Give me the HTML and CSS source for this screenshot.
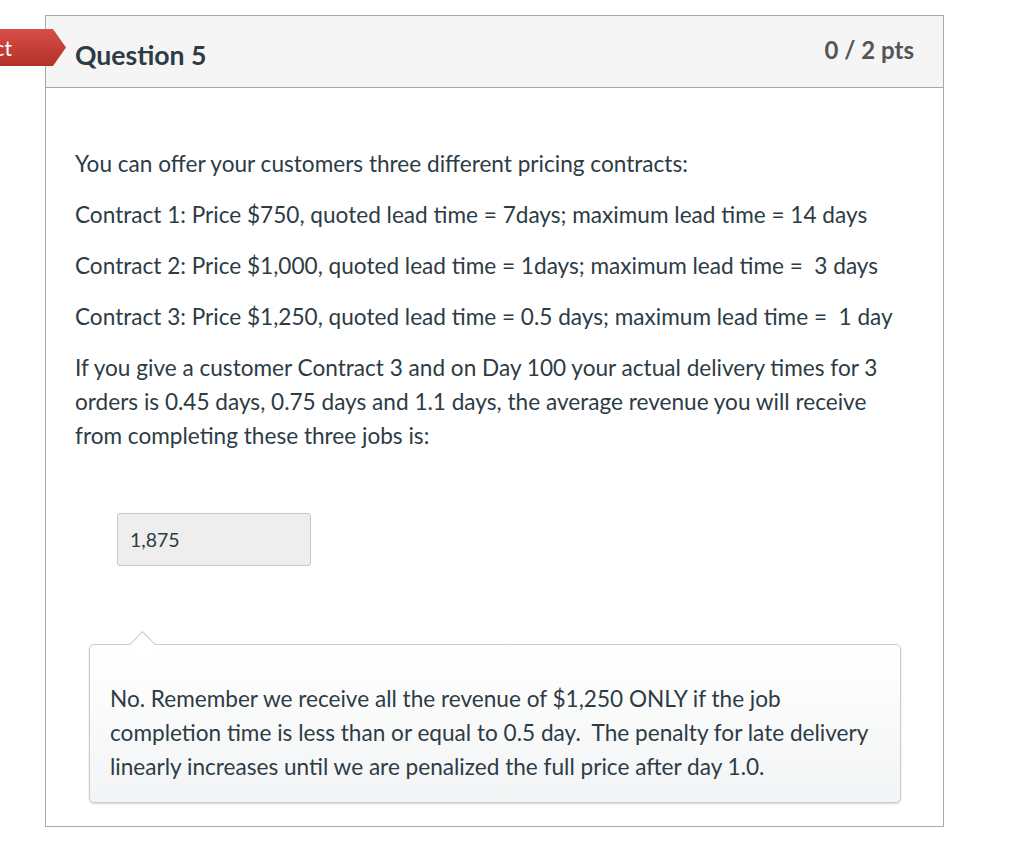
FILE: index.html
```html
<!DOCTYPE html>
<html>
<head>
<meta charset="utf-8">
<link rel="stylesheet" href="styles.css">
</head>
<body>
<div class="question">
  <div class="answer-tag">Incorrect</div>
  <div class="header">
    <span class="title">Question 5</span>
    <span class="pts">0 / 2 pts</span>
  </div>
  <div class="content">
    <div class="text">
      <p>You can offer your customers three different pricing contracts:</p>
      <p>Contract 1: Price $750, quoted lead time = 7days; maximum lead time = 14 days</p>
      <p>Contract 2: Price $1,000, quoted lead time = 1days; maximum lead time = &nbsp;3 days</p>
      <p>Contract 3: Price $1,250, quoted lead time = 0.5 days; maximum lead time = &nbsp;1 day</p>
      <p>If you give a customer Contract 3 and on Day 100 your actual delivery times for 3 orders is 0.45 days, 0.75 days and 1.1 days, the average revenue you will receive from completing these three jobs is:</p>
    </div>
    <div class="answer">1,875</div>
    <div class="feedback">
      <p>No. Remember we receive all the revenue of $1,250 ONLY if the job completion time is less than or equal to 0.5 day.&nbsp; The penalty for late delivery linearly increases until we are penalized the full price after day 1.0.</p>
    </div>
  </div>
</div>
</body>
</html>
```
FILE: styles.css
```css
html, body {
  margin: 0;
  padding: 0;
  background: #fff;
  overflow: hidden;
}
body {
  font-family: Lato, "Noto Sans", sans-serif;
  color: #2d3b45;
}
.question {
  position: relative;
  margin: 15px 0 0 45px;
  width: 899px;
  box-sizing: border-box;
  border: 1px solid #aaa;
}
.answer-tag {
  position: absolute;
  left: -126px;
  top: 13px;
  width: 146px;
  height: 37px;
  box-sizing: border-box;
  padding-right: 54px;
  text-align: right;
  line-height: 37px;
  font-size: 21px;
  color: #fff;
  background: linear-gradient(to bottom, #d55049 0%, #c63f38 50%, #b2312b 100%);
  clip-path: polygon(0 0, calc(100% - 13px) 0, 100% 50%, calc(100% - 13px) 100%, 0 100%);
}
.header {
  height: 71px;
  background: #f5f5f5;
  border-bottom: 1px solid #aaa;
  display: flex;
  justify-content: space-between;
  padding: 0 29px;
}
.title {
  font-size: 26.6px;
  font-weight: 700;
  color: #2d3b45;
  margin-top: 24px;
  line-height: 30px;
}
.pts {
  font-size: 24px;
  font-weight: 700;
  color: #555;
  margin-top: 20px;
  line-height: 28px;
}
.content {
  padding: 59px 29px 23px 29px;
}
.text p {
  margin: 0 0 17px;
  font-size: 22.6px;
  line-height: 34px;
}
.text p:last-child {
  margin-bottom: 0;
}
.answer {
  margin: 60px 0 0 42px;
  width: 194px;
  height: 53px;
  box-sizing: border-box;
  border: 1px solid #c8c8c8;
  border-radius: 3px;
  background: #eee;
  font-size: 19.5px;
  line-height: 51px;
  padding-left: 12px;
}
.feedback {
  position: relative;
  margin: 78px 13px 0 14px;
  border: 1px solid #c7cdd1;
  border-radius: 5px;
  background: linear-gradient(to bottom, #ffffff 0%, #f3f4f5 100%);
  box-shadow: 0 1px 2px rgba(0, 0, 0, 0.18);
  padding: 37px 20px 18px 20px;
}
.feedback::before {
  content: "";
  position: absolute;
  left: 43px;
  top: -10px;
  width: 18px;
  height: 18px;
  background: #fff;
  border-left: 1px solid #c7cdd1;
  border-top: 1px solid #c7cdd1;
  transform: rotate(45deg);
}
.feedback p {
  margin: 0;
  font-size: 22.6px;
  line-height: 34px;
}
```
